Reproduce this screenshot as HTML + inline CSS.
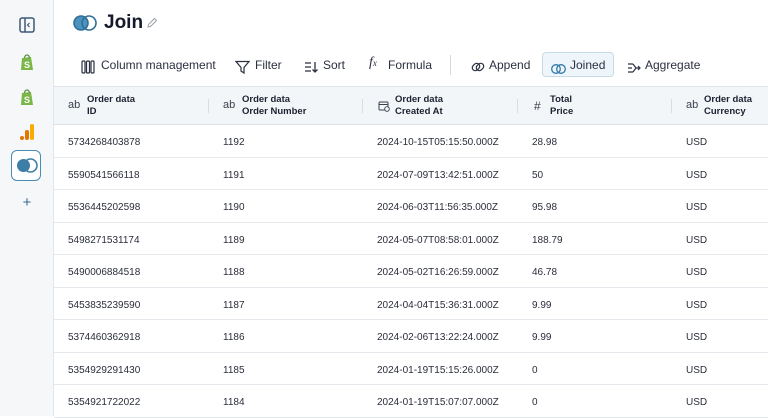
<!DOCTYPE html>
<html><head><style>
*{margin:0;padding:0;box-sizing:border-box}
body{width:768px;height:416px;overflow:hidden;background:#fff;font-family:"Liberation Sans",sans-serif;color:#1f2230;position:relative}
.side{position:absolute;left:0;top:0;width:54px;height:416px;background:#f5f7f9;border-right:1px solid #e2e6ea}
.ic{position:absolute;left:27px;transform:translateX(-50%)}
.title{position:absolute;left:74px;top:12px;font-size:19px;font-weight:bold;color:#15192b}
.tb{position:absolute;top:56px;height:18px}
.tt{position:absolute;top:58px;font-size:12px;color:#2b3040;white-space:nowrap}
.hdr{position:absolute;left:54px;top:86px;width:714px;height:39px;background:#f3f6f9;border-top:1px solid #e0e4e8;border-bottom:1px solid #dde2e6}
.h{position:absolute;top:7px;font-size:9.5px;font-weight:bold;line-height:12px;color:#1d2130}
.hi{position:absolute;top:12px;font-size:12px;color:#3a3f4c}
.sep{position:absolute;top:12px;width:1px;height:14px;background:#d8dde2}
.row{position:absolute;left:54px;width:714px;height:32.5px;border-bottom:1px solid #e5e8ec;font-size:10px;color:#2a2e3a}
.row span{position:absolute;top:12px}
</style></head><body>
<div class="side">
 <svg class="ic" style="top:17px" width="16" height="16" viewBox="0 0 16 16"><rect x="1" y="1" width="14" height="14" rx="2" fill="none" stroke="#3d5a78" stroke-width="1.5"/><line x1="6" y1="1" x2="6" y2="15" stroke="#3d5a78" stroke-width="1.5"/><path d="M10.5 6 L8.5 8 L10.5 10" fill="none" stroke="#3d5a78" stroke-width="1.2"/></svg>
 <svg class="ic" style="top:54px" width="14" height="17" viewBox="0 0 14 17"><path d="M2 4 L11 3 L13 16 L1 16 Z" fill="#7ab648"/><path d="M4.5 4 C5 0 9 0 9.5 4" fill="none" stroke="#5e8e3e" stroke-width="1.2"/><text x="7" y="14" font-size="9" font-weight="bold" fill="#fff" text-anchor="middle" font-family="Liberation Sans">S</text></svg>
 <svg class="ic" style="top:89px" width="14" height="17" viewBox="0 0 14 17"><path d="M2 4 L11 3 L13 16 L1 16 Z" fill="#7ab648"/><path d="M4.5 4 C5 0 9 0 9.5 4" fill="none" stroke="#5e8e3e" stroke-width="1.2"/><text x="7" y="14" font-size="9" font-weight="bold" fill="#fff" text-anchor="middle" font-family="Liberation Sans">S</text></svg>
 <svg class="ic" style="top:123px" width="16" height="17" viewBox="0 0 16 17"><rect x="11" y="1" width="4" height="16" rx="2" fill="#f9ab00"/><rect x="6" y="7" width="4" height="10" rx="2" fill="#e37400"/><circle cx="3" cy="15" r="2" fill="#e37400"/></svg>
 <div style="position:absolute;left:11px;top:150px;width:30px;height:31px;border:1.5px solid #4a8bb0;border-radius:6px;background:#fff"></div>
 <svg class="ic" style="top:158px" width="22" height="15" viewBox="0 0 22 15"><circle cx="7.5" cy="7.5" r="6.5" fill="#3d7ea6"/><circle cx="14.5" cy="7.5" r="6.5" fill="none" stroke="#3d7ea6" stroke-width="1.6"/></svg>
 <div class="ic" style="top:194px;font-size:15px;color:#3d6a8f">+</div>
</div>
<svg style="position:absolute;left:73px;top:15px" width="24" height="16" viewBox="0 0 24 16"><circle cx="8" cy="8" r="7" fill="#4b93bd"/><circle cx="16" cy="8" r="7" fill="none" stroke="#2f6f98" stroke-width="1.6"/><circle cx="8" cy="8" r="7" fill="none" stroke="#2f6f98" stroke-width="1.6"/></svg>
<div class="title" style="left:104px">Join</div>
<svg style="position:absolute;left:146px;top:17px" width="12" height="12" viewBox="0 0 12 12"><path d="M2 10 L2.5 7.5 L8.5 1.5 L10.5 3.5 L4.5 9.5 Z" fill="none" stroke="#9aa0aa" stroke-width="1"/></svg>
<svg class="tb" style="left:81px;top:58px" width="14" height="14" viewBox="0 0 14 14"><rect x="1" y="1" width="3" height="12" rx="1" fill="none" stroke="#2b3040" stroke-width="1.2"/><rect x="5.5" y="1" width="3" height="12" rx="1" fill="none" stroke="#2b3040" stroke-width="1.2"/><rect x="10" y="1" width="3" height="12" rx="1" fill="none" stroke="#2b3040" stroke-width="1.2"/></svg><div class="tt" style="left:101px">Column management</div>
<svg class="tb" style="left:235px;top:58px" width="15" height="14" viewBox="0 0 15 14"><path d="M1 1.5 H14 L9 7.5 V13 L6 11 V7.5 Z" fill="none" stroke="#2b3040" stroke-width="1.2"/></svg><div class="tt" style="left:255px">Filter</div>
<svg class="tb" style="left:304px;top:58px" width="14" height="14" viewBox="0 0 14 14"><path d="M1 3H7M1 7H7M1 11H7M11 2V12M8.5 9.5L11 12L13.5 9.5" fill="none" stroke="#2b3040" stroke-width="1.3"/></svg><div class="tt" style="left:323px">Sort</div>
<div class="tt" style="left:369px;top:55px;font-family:'Liberation Serif';font-style:italic;font-size:14px">f<span style="font-size:9px">x</span></div><div class="tt" style="left:388px">Formula</div>
<div style="position:absolute;left:450px;top:55px;width:1px;height:20px;background:#d5d9de"></div>
<svg class="tb" style="left:471px;top:58px" width="14" height="14" viewBox="0 0 14 14"><rect x="1" y="4" width="8" height="6" rx="3" transform="rotate(-45 5 7)" fill="none" stroke="#2b3040" stroke-width="1.2"/><rect x="5" y="4" width="8" height="6" rx="3" transform="rotate(-45 9 7)" fill="none" stroke="#2b3040" stroke-width="1.2"/></svg><div class="tt" style="left:489px">Append</div>
<div style="position:absolute;left:542px;top:52px;width:72px;height:25px;border:1px solid #c5dbe8;background:#eef6fb;border-radius:4px"></div>
<svg class="tb" style="left:551px;top:60px" width="15" height="11" viewBox="0 0 15 11"><circle cx="5" cy="5.5" r="4.3" fill="none" stroke="#2f78a8" stroke-width="1.3"/><circle cx="10" cy="5.5" r="4.3" fill="none" stroke="#2f78a8" stroke-width="1.3"/></svg><div class="tt" style="left:570px">Joined</div>
<svg class="tb" style="left:627px;top:59px" width="14" height="12" viewBox="0 0 14 12"><path d="M1 2H6M1 6H5M1 10H6M6 2L9 6L6 10M9 6H13M11 4L13 6L11 8" fill="none" stroke="#2b3040" stroke-width="1.2"/></svg><div class="tt" style="left:645px">Aggregate</div>
<div class="hdr">
 <div class="hi" style="left:14px;font-size:11px">ab</div><div class="h" style="left:33px">Order data<br>ID</div><div class="sep" style="left:154px"></div>
 <div class="hi" style="left:169px;font-size:11px">ab</div><div class="h" style="left:188px">Order data<br>Order Number</div><div class="sep" style="left:308px"></div>
 <svg style="position:absolute;left:324px;top:13px" width="12" height="12" viewBox="0 0 12 12"><rect x="1" y="2" width="9" height="8" rx="1" fill="none" stroke="#3a3f4c" stroke-width="1"/><line x1="1" y1="4.5" x2="10" y2="4.5" stroke="#3a3f4c"/><circle cx="9" cy="9" r="2.3" fill="#f3f6f9" stroke="#3a3f4c" stroke-width="0.9"/></svg><div class="h" style="left:341px">Order data<br>Created At</div><div class="sep" style="left:463px"></div>
 <div class="hi" style="left:480px">#</div><div class="h" style="left:496px">Total<br>Price</div><div class="sep" style="left:617px"></div>
 <div class="hi" style="left:632px;font-size:11px">ab</div><div class="h" style="left:650px">Order data<br>Currency</div>
</div>
<div class="row" style="top:125px"><span style="left:14px">5734268403878</span><span style="left:169px">1192</span><span style="left:323px">2024-10-15T05:15:50.000Z</span><span style="left:478px">28.98</span><span style="left:632px">USD</span></div>
<div class="row" style="top:157.5px"><span style="left:14px">5590541566118</span><span style="left:169px">1191</span><span style="left:323px">2024-07-09T13:42:51.000Z</span><span style="left:478px">50</span><span style="left:632px">USD</span></div>
<div class="row" style="top:190px"><span style="left:14px">5536445202598</span><span style="left:169px">1190</span><span style="left:323px">2024-06-03T11:56:35.000Z</span><span style="left:478px">95.98</span><span style="left:632px">USD</span></div>
<div class="row" style="top:222.5px"><span style="left:14px">5498271531174</span><span style="left:169px">1189</span><span style="left:323px">2024-05-07T08:58:01.000Z</span><span style="left:478px">188.79</span><span style="left:632px">USD</span></div>
<div class="row" style="top:255px"><span style="left:14px">5490006884518</span><span style="left:169px">1188</span><span style="left:323px">2024-05-02T16:26:59.000Z</span><span style="left:478px">46.78</span><span style="left:632px">USD</span></div>
<div class="row" style="top:287.5px"><span style="left:14px">5453835239590</span><span style="left:169px">1187</span><span style="left:323px">2024-04-04T15:36:31.000Z</span><span style="left:478px">9.99</span><span style="left:632px">USD</span></div>
<div class="row" style="top:320px"><span style="left:14px">5374460362918</span><span style="left:169px">1186</span><span style="left:323px">2024-02-06T13:22:24.000Z</span><span style="left:478px">9.99</span><span style="left:632px">USD</span></div>
<div class="row" style="top:352.5px"><span style="left:14px">5354929291430</span><span style="left:169px">1185</span><span style="left:323px">2024-01-19T15:15:26.000Z</span><span style="left:478px">0</span><span style="left:632px">USD</span></div>
<div class="row" style="top:385px"><span style="left:14px">5354921722022</span><span style="left:169px">1184</span><span style="left:323px">2024-01-19T15:07:07.000Z</span><span style="left:478px">0</span><span style="left:632px">USD</span></div>
</body></html>
